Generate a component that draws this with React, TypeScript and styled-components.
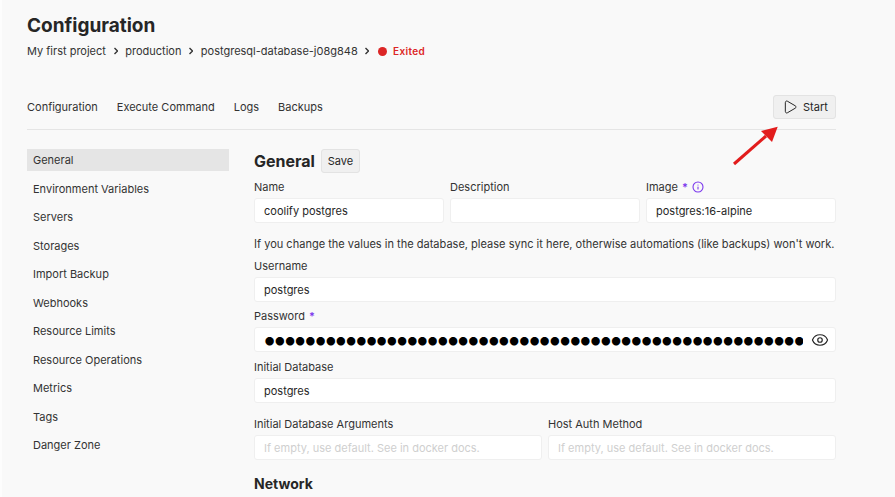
import { Fragment } from 'react';
import styled, { createGlobalStyle } from 'styled-components';
import { Eye, Info, Play } from 'lucide-react';

const GlobalStyle = createGlobalStyle`
  html, body {
    margin: 0;
    height: 100%;
    overflow: hidden;
    background: #f9f9f9;
  }
  body {
    font-family: Inter, "Liberation Sans", sans-serif;
    color: #262626;
  }
  * {
    box-sizing: border-box;
  }
`;

const Page = styled.div`
  position: relative;
  width: 895px;
  height: 497px;
  padding: 0 59px 0 25px;
  border-left: 2px solid #fdfdfd;
  overflow: hidden;
`;

const Title = styled.h1`
  margin: 0;
  padding-top: 13px;
  height: 38px;
  font-size: 19px;
  line-height: 25px;
  font-weight: 700;
  color: #262626;
`;

const Breadcrumb = styled.nav`
  display: flex;
  align-items: center;
  height: 26px;
  font-size: 11px;
  color: #333;
`;

const Crumb = styled.span`
  white-space: nowrap;
`;

const Chevron = styled.svg`
  width: 4px;
  height: 8px;
  margin: 0 7.7px;
  fill: none;
  stroke: #333;
  stroke-width: 1.4;
`;

const StatusDot = styled.span`
  width: 9px;
  height: 9px;
  margin: 0 6px 0 1px;
  border-radius: 50%;
  background: #dc2626;
`;

const StatusText = styled.span`
  font-size: 10px;
  font-weight: 600;
  letter-spacing: 0.35px;
  color: #dc2626;
`;

const TabBar = styled.div`
  display: flex;
  align-items: center;
  justify-content: space-between;
  height: 35px;
  margin-top: 31px;
  padding-bottom: 10px;
  border-bottom: 1px solid #e5e5e5;
`;

const Tabs = styled.div`
  display: flex;
  gap: 19px;
`;

const Tab = styled.span`
  font-size: 11px;
  color: #333;
`;

const Button = styled.button`
  display: inline-flex;
  align-items: center;
  height: 24px;
  border: 1px solid #e3e3e3;
  border-radius: 3px;
  background: #f0f0f0;
  font-family: inherit;
  font-size: 11px;
  color: #262626;
`;

const StartButton = styled(Button)`
  width: 63px;
  padding: 0 0 0 8px;
  gap: 5px;
  svg {
    width: 16px;
    height: 16px;
    stroke-width: 1.5;
  }
`;

const Columns = styled.div`
  display: grid;
  grid-template-columns: 202px 582px;
  column-gap: 25px;
  padding-top: 19px;
`;

const Sidebar = styled.aside`
  display: flex;
  flex-direction: column;
  gap: 6.5px;
`;

const SideItem = styled.div<{ $active?: boolean }>`
  height: 22px;
  padding-left: 6px;
  font-size: 11px;
  line-height: 22px;
  color: #333;
  background: ${(props) => (props.$active ? '#e5e5e5' : 'transparent')};
`;

const Main = styled.main`
  display: flex;
  flex-direction: column;
`;

const HeadingRow = styled.div`
  display: flex;
  align-items: center;
  gap: 6px;
  height: 24px;
`;

const Heading = styled.h2`
  margin: 0;
  font-size: 16px;
  font-weight: 700;
  color: #262626;
`;

const SaveButton = styled(Button)`
  justify-content: center;
  width: 39px;
  padding: 0;
`;

const Row = styled.div<{ $cols: number; $top: number }>`
  display: grid;
  grid-template-columns: repeat(${(props) => props.$cols}, 1fr);
  column-gap: 6px;
  margin-top: ${(props) => props.$top}px;
`;

const Field = styled.label<{ $top?: number }>`
  display: block;
  margin-top: ${(props) => props.$top ?? 0}px;
`;

const LabelText = styled.span`
  display: flex;
  align-items: center;
  gap: 4px;
  height: 18px;
  margin-bottom: 2px;
  font-size: 11px;
  color: #333;
  svg {
    width: 12px;
    height: 12px;
    color: #7c3aed;
    stroke-width: 2.2;
  }
`;

const Required = styled.span`
  font-weight: 600;
  color: #7c3aed;
`;

const InputBox = styled.div`
  position: relative;
`;

const Input = styled.input`
  display: block;
  width: 100%;
  height: 25px;
  padding: 0 9px;
  border: 1px solid #efefef;
  border-radius: 3px;
  background: #fff;
  font-family: inherit;
  font-size: 11px;
  color: #262626;
  outline: none;

  &::placeholder {
    color: #cfcfcf;
  }
`;

const PasswordInput = styled(Input)`
  padding: 0 32px 0 7px;
  color: #000;
  font-size: 27px;
  letter-spacing: -5px;
`;

const EyeButton = styled.span`
  position: absolute;
  top: 4px;
  right: 7px;
  display: flex;
  color: #262626;
  svg {
    width: 18px;
    height: 18px;
    stroke-width: 1.6;
  }
`;

const Helper = styled.p`
  margin: 14px 0 5px;
  height: 15px;
  font-size: 11.04px;
  line-height: 15px;
  white-space: nowrap;
  color: #333;
`;

const NetworkHeading = styled(Heading)`
  margin-top: 15px;
  font-size: 14px;
`;

const Annotation = styled.svg`
  position: absolute;
  left: 726px;
  top: 122px;
  width: 56px;
  height: 48px;
`;

const navItems = [
  'General',
  'Environment Variables',
  'Servers',
  'Storages',
  'Import Backup',
  'Webhooks',
  'Resource Limits',
  'Resource Operations',
  'Metrics',
  'Tags',
  'Danger Zone',
];

const crumbs = ['My first project', 'production', 'postgresql-database-j08g848'];
const tabs = ['Configuration', 'Execute Command', 'Logs', 'Backups'];
const placeholder = 'If empty, use default. See in docker docs.';

const App = () => {
  return (
    <Page>
      <GlobalStyle />
      <Title>Configuration</Title>
      <Breadcrumb>
        {crumbs.map((crumb) => (
          <Fragment key={crumb}>
            <Crumb>{crumb}</Crumb>
            <Chevron viewBox="0 0 4 8">
              <path d="M0.5 1l3 3-3 3" />
            </Chevron>
          </Fragment>
        ))}
        <StatusDot />
        <StatusText>Exited</StatusText>
      </Breadcrumb>
      <TabBar>
        <Tabs>
          {tabs.map((tab) => (
            <Tab key={tab}>{tab}</Tab>
          ))}
        </Tabs>
        <StartButton>
          <Play />
          Start
        </StartButton>
      </TabBar>
      <Columns>
        <Sidebar>
          {navItems.map((item, i) => (
            <SideItem key={item} $active={i === 0}>
              {item}
            </SideItem>
          ))}
        </Sidebar>
        <Main>
          <HeadingRow>
            <Heading>General</Heading>
            <SaveButton>Save</SaveButton>
          </HeadingRow>
          <Row $cols={3} $top={5}>
            <Field>
              <LabelText>Name</LabelText>
              <Input readOnly value="coolify postgres" />
            </Field>
            <Field>
              <LabelText>Description</LabelText>
              <Input readOnly value="" />
            </Field>
            <Field>
              <LabelText>
                Image <Required>*</Required>
                <Info />
              </LabelText>
              <Input readOnly value="postgres:16-alpine" />
            </Field>
          </Row>
          <Helper>
            If you change the values in the database, please sync it here, otherwise automations (like backups) won't work.
          </Helper>
          <Field>
            <LabelText>Username</LabelText>
            <Input readOnly value="postgres" />
          </Field>
          <Field $top={5}>
            <LabelText>
              Password <Required>*</Required>
            </LabelText>
            <InputBox>
              <PasswordInput readOnly type="password" value={'x'.repeat(80)} />
              <EyeButton>
                <Eye />
              </EyeButton>
            </InputBox>
          </Field>
          <Field $top={6}>
            <LabelText>Initial Database</LabelText>
            <Input readOnly value="postgres" />
          </Field>
          <Row $cols={2} $top={12}>
            <Field>
              <LabelText>Initial Database Arguments</LabelText>
              <Input readOnly placeholder={placeholder} />
            </Field>
            <Field>
              <LabelText>Host Auth Method</LabelText>
              <Input readOnly placeholder={placeholder} />
            </Field>
          </Row>
          <NetworkHeading>Network</NetworkHeading>
        </Main>
      </Columns>
      <Annotation viewBox="0 0 56 48">
        <path d="M6 42L38 14" stroke="#e21c1c" strokeWidth="3" fill="none" />
        <path d="M49.7 4.7L33 9L44 20Z" fill="#e21c1c" />
      </Annotation>
    </Page>
  );
};

export default App;
